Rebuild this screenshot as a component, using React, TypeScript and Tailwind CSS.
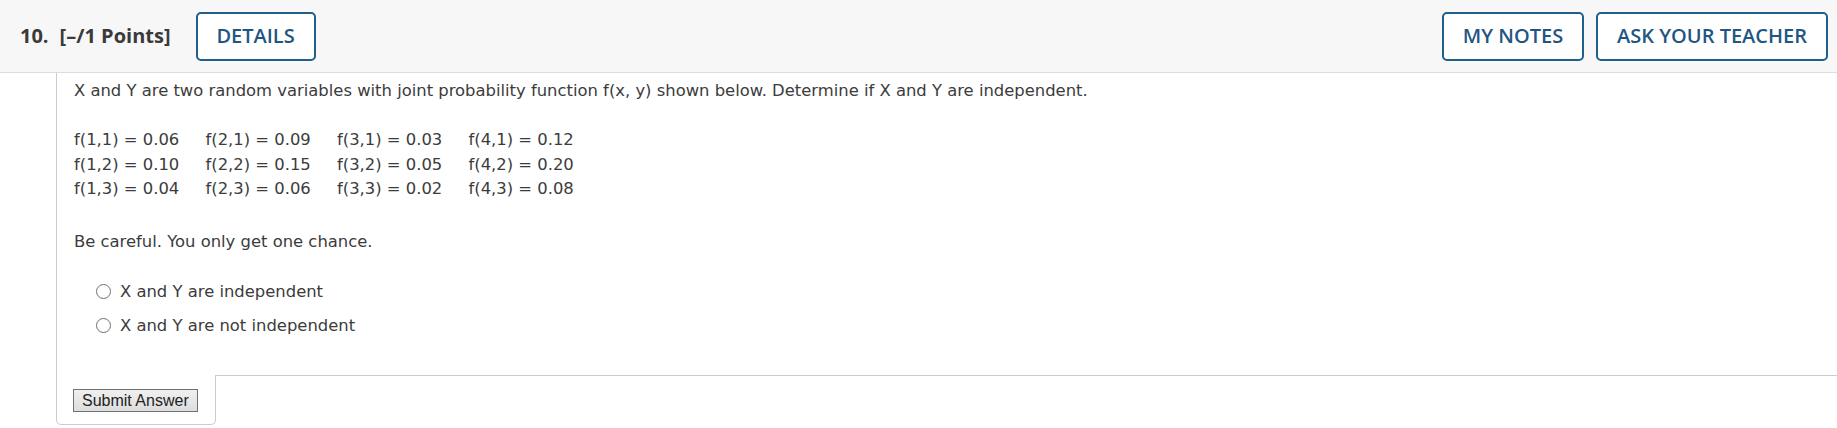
import React from 'react';

const cells = [
  ['f(1,1) = 0.06', 'f(2,1) = 0.09', 'f(3,1) = 0.03', 'f(4,1) = 0.12'],
  ['f(1,2) = 0.10', 'f(2,2) = 0.15', 'f(3,2) = 0.05', 'f(4,2) = 0.20'],
  ['f(1,3) = 0.04', 'f(2,3) = 0.06', 'f(3,3) = 0.02', 'f(4,3) = 0.08'],
];

const choices = ['X and Y are independent', 'X and Y are not independent'];

const HeaderButton: React.FC<{ label: string; width: string }> = ({ label, width }) => (
  <button
    className={`h-[49px] ${width} rounded-[5px] border-2 border-[#1f5f8b] bg-white text-[20px] font-semibold text-[#1f5683] flex items-center justify-center`}
    style={{ fontFamily: '"Open Sans", sans-serif' }}
  >
    {label}
  </button>
);

const App: React.FC = () => {
  return (
    <div className="w-[1837px] h-[428px] bg-white overflow-hidden">
      <header className="h-[73px] bg-[#f7f7f7] border-b border-[#dddddd] flex items-center justify-between pl-[20px] pr-[9px]">
        <div className="flex items-center">
          <div
            className="flex items-center text-[20px] font-bold text-[#3a3a3a]"
            style={{ fontFamily: '"Open Sans", sans-serif' }}
          >
            <span>10.</span>
            <span className="ml-[11px]">[–/1 Points]</span>
          </div>
          <div className="ml-[25px]">
            <HeaderButton label="DETAILS" width="w-[120px]" />
          </div>
        </div>
        <div className="flex items-center gap-[12px]">
          <HeaderButton label="MY NOTES" width="w-[142px]" />
          <HeaderButton label="ASK YOUR TEACHER" width="w-[232px]" />
        </div>
      </header>

      <div
        className="ml-[56px] text-[#3c3c3c] text-[16.4px] leading-[24.6px]"
        style={{ fontFamily: '"DejaVu Sans", Verdana, sans-serif' }}
      >
        <div className="border-l border-[#cccccc] pl-[17px] pt-[6px] pb-[32px]">
          <p>
            X and Y are two random variables with joint probability function f(x, y) shown below. Determine if X and Y are independent.
          </p>

          <div className="mt-[24.6px] grid grid-cols-[131.5px_131.5px_131.5px_auto] w-max">
            {cells.flat().map((c) => (
              <span key={c} className="whitespace-pre">
                {c}
              </span>
            ))}
          </div>

          <p className="mt-[27.7px]">Be careful. You only get one chance.</p>

          <div className="mt-[20.7px] pl-[22px]">
            {choices.map((c) => (
              <label key={c} className="h-[34px] flex items-center">
                <span className="w-[15px] h-[15px] rounded-full border border-[#6f6f6f] bg-white shrink-0" />
                <span className="ml-[9px]">{c}</span>
              </label>
            ))}
          </div>
        </div>

        <div className="flex h-[50px]">
          <div className="w-[160px] border-l border-r border-b border-[#cccccc] rounded-b-[5px] pl-[16px] pt-[14px]">
            <button
              className="h-[23px] px-[8px] border border-[#707070] bg-gradient-to-b from-[#f0f0f0] to-[#dddddd] text-[16px] leading-[21px] text-[#222222]"
              style={{ fontFamily: '"Liberation Sans", Arial, sans-serif' }}
            >
              Submit Answer
            </button>
          </div>
          <div className="flex-1 border-t border-[#cccccc]" />
        </div>
      </div>
    </div>
  );
};

export default App;
